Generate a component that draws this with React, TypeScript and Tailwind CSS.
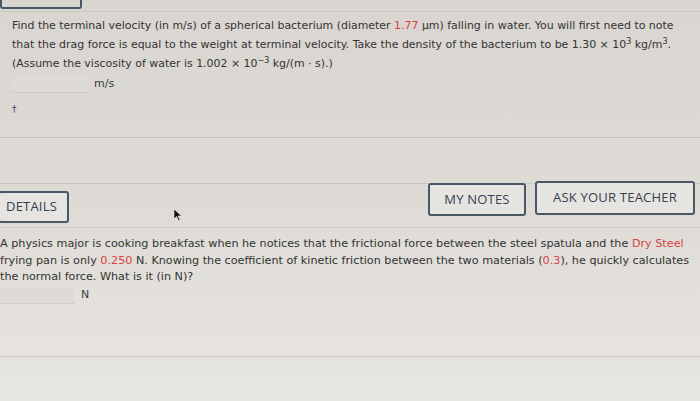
import React from 'react'

const red = 'text-[#d9443f]'

function Btn({ label, className }: { label: string; className?: string }) {
  return (
    <div
      className={`flex items-center justify-center border-2 border-[#4a5764] rounded-[3px] bg-[#e6e4e0] text-[#34414f] text-[13px] font-medium tracking-[0.2px] ${className ?? ''}`}
      style={{ fontFamily: '"Open Sans", "Liberation Sans", sans-serif' }}
    >
      {label}
    </div>
  )
}

function AnswerBox({ unit, w }: { unit: string; w: string }) {
  return (
    <div className="flex items-center gap-[6px]">
      <div className={`${w} h-[17px] border-b border-[#cfccc6] bg-[#dedad5]`} />
      <span className="text-[11px] text-[#3a3a3a]">{unit}</span>
    </div>
  )
}

export default function App() {
  return (
    <div
      className="relative w-[700px] h-[401px] overflow-hidden bg-gradient-to-b from-[#d9d5d0] via-[#dedbd6] to-[#e8e6e1] text-[#333333]"
      style={{ fontFamily: '"DejaVu Sans", Verdana, sans-serif' }}
    >
      {/* stub of previous button */}
      <div className="w-[82px] h-[10px] border-x-2 border-b-2 border-[#4a5764] rounded-b-[3px] -mt-[1px]" />

      {/* question 1 */}
      <div className="border-t border-[#cbc8c2] mt-[2px] pl-[12px] pt-[4px] h-[126px]">
        <p className="text-[10.95px] leading-[19px] whitespace-nowrap">
          Find the terminal velocity (in m/s) of a spherical bacterium (diameter <span className={red}>1.77</span> μm) falling in water. You will first need to note
          <br />
          that the drag force is equal to the weight at terminal velocity. Take the density of the bacterium to be 1.30 × 10<sup className="text-[8px]">3</sup> kg/m<sup className="text-[8px]">3</sup>.
          <br />
          (Assume the viscosity of water is 1.002 × 10<sup className="text-[8px]">−3</sup> kg/(m · s).)
        </p>
        <div className="mt-[3px]">
          <AnswerBox unit="m/s" w="w-[76px]" />
        </div>
        <div className="mt-[10px] text-[9px] text-[#4a3d5a]">†</div>
      </div>

      <div className="border-t border-[#c6c3bd] h-[46px]" />

      {/* toolbar */}
      <div className="border-t border-[#c9c6c0] flex items-start h-[44px]">
        <Btn label="DETAILS" className="w-[71px] h-[32px] mt-[7px] -ml-[2px] justify-start pl-[6px]" />
        <div className="flex-1" />
        <Btn label="MY NOTES" className="w-[98px] h-[33px] -mt-[1px]" />
        <Btn label="ASK YOUR TEACHER" className="w-[160px] h-[34px] -mt-[3px] ml-[9px] mr-[5px]" />
      </div>

      {/* question 2 */}
      <div className="border-t border-[#cfccc6] pt-[8px] h-[129px]">
        <p className="text-[11.2px] leading-[16.5px] whitespace-nowrap">
          A physics major is cooking breakfast when he notices that the frictional force between the steel spatula and the <span className={red}>Dry Steel</span>
          <br />
          frying pan is only <span className={red}>0.250</span> N. Knowing the coefficient of kinetic friction between the two materials (<span className={red}>0.3</span>), he quickly calculates
          <br />
          the normal force. What is it (in N)?
        </p>
        <div className="mt-[1px]">
          <AnswerBox unit="N" w="w-[75px]" />
        </div>
      </div>

      <div className="border-t border-[#c9c6c0]" />

      {/* mouse cursor */}
      <svg className="absolute left-[173px] top-[208px]" width="9" height="13" viewBox="0 0 9 13">
        <path d="M1 1 L1 11 L3.5 8.5 L5.5 12.5 L7 11.8 L5 8 L8.5 8 Z" fill="#111" stroke="#eee" strokeWidth="0.6" />
      </svg>
    </div>
  )
}
